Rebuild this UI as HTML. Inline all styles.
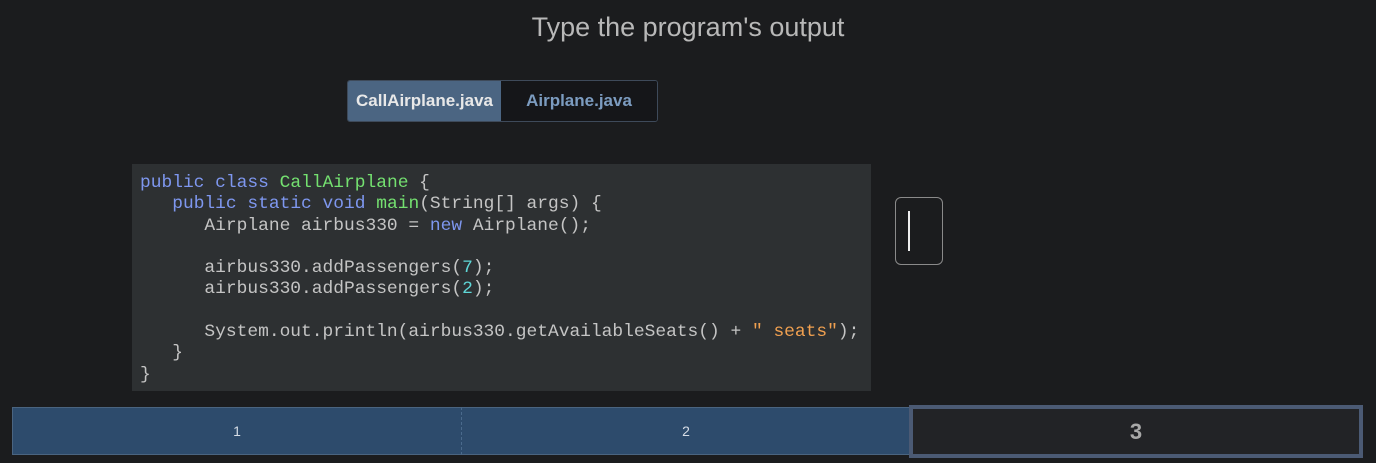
<!DOCTYPE html>
<html><head><style>
body{margin:0;width:1376px;height:463px;background:#1b1c1e;font-family:"Liberation Sans",sans-serif;position:relative;overflow:hidden}
.title{position:absolute;top:12px;left:0;width:1376px;text-align:center;font-size:27px;color:#b8b8b8;font-weight:300}
.tabs{position:absolute;left:347px;top:80px;width:309px;height:40px;border:1px solid #3e4a5a;border-radius:3px;display:flex;overflow:hidden}
.tab{height:40px;line-height:40px;font-weight:bold;font-size:17px;text-align:center}
.t1{width:153px;background:#4b6582;color:#e8e8e8}
.t2{flex:1;background:#151619;color:#7c9cc0}
.code{position:absolute;left:132px;top:164px;width:739px;height:227px;background:#2d3032;box-sizing:border-box;padding:9px 0 0 8px;font-family:"Liberation Mono",monospace;font-size:17.9px;line-height:21.3px;color:#c4c4c4;white-space:pre}
.k{color:#7e97ef}.f{color:#74e070}.n{color:#5fd7d7}.s{color:#f0a050}
.inp{position:absolute;left:895px;top:197px;width:48px;height:68px;border:1px solid #8a8a8a;border-radius:6px;box-sizing:border-box}
.caret{position:absolute;left:12px;top:13px;width:2px;height:40px;background:#eee}
.bar{position:absolute;top:407px;height:48px;background:#2d4b6c;border-top:1px solid #4a6480;border-bottom:1px solid #4a6480;box-sizing:border-box;color:#d6dde6;font-size:14px;text-align:center;line-height:46px}
.b3{position:absolute;left:909px;top:405px;width:454px;height:53px;border:4px solid #4b5a74;box-sizing:border-box;background:#222326;color:#a8a8a8;font-weight:bold;font-size:22px;text-align:center;line-height:45px}
</style></head><body>
<div class="title">Type the program's output</div>
<div class="tabs"><div class="tab t1">CallAirplane.java</div><div class="tab t2">Airplane.java</div></div>
<div class="code"><span class="k">public class</span> <span class="f">CallAirplane</span> {
   <span class="k">public static void</span> <span class="f">main</span>(String[] args) {
      Airplane airbus330 = <span class="k">new</span> Airplane();

      airbus330.addPassengers(<span class="n">7</span>);
      airbus330.addPassengers(<span class="n">2</span>);

      System.out.println(airbus330.getAvailableSeats() + <span class="s">" seats"</span>);
   }
}</div>
<div class="inp"><div class="caret"></div></div>
<div class="bar" style="left:12px;width:450px;border-left:1px solid #4a6480;border-right:1px dashed #4a6a8c">1</div>
<div class="bar" style="left:462px;width:448px">2</div>
<div class="b3">3</div>
</body></html>
